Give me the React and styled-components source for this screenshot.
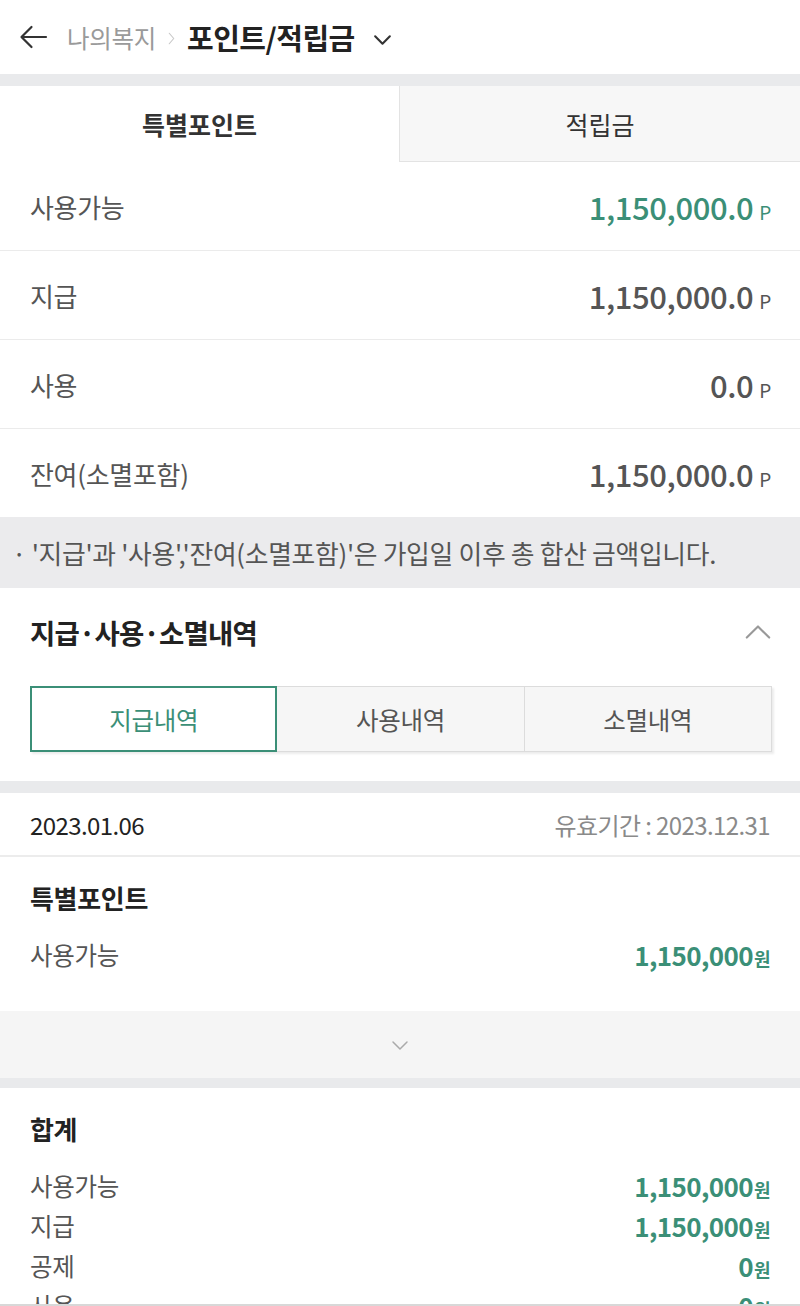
import React from 'react'
import styled, { createGlobalStyle } from 'styled-components'

const GREEN = '#3b8f77'

const GlobalStyle = createGlobalStyle`
  body {
    margin: 0;
    background: #fff;
    font-family: "Noto Sans CJK KR", "Noto Sans", sans-serif;
    color: #333;
  }
  * { box-sizing: border-box; }
`

const Page = styled.div`
  width: 800px;
  height: 1306px;
  overflow: hidden;
  border-bottom: 2px solid #d8d8d8;
`

const Header = styled.header`
  height: 74px;
  display: flex;
  align-items: center;
  padding: 0 18px;
  background: #fff;
`

const Crumb = styled.span`
  font-size: 24.5px;
  color: #9a9a9a;
  margin-left: 19px;
  letter-spacing: -0.3px;
`

const Sep = styled.span`
  display: flex;
  margin: 2px 8px 0 8px;
`

const Title = styled.h1`
  margin: 0;
  font-size: 29px;
  font-weight: 700;
  color: #222;
  letter-spacing: -0.5px;
`

const TitleCaret = styled.span`
  display: flex;
  margin: 4px 0 0 17px;
`

const Band = styled.div`
  height: ${p => p.h || 12}px;
  background: #e9eaec;
`

const Tabs = styled.div`
  display: grid;
  grid-template-columns: 399px 1fr;
  height: 76px;
`

const Tab = styled.div`
  display: flex;
  align-items: center;
  justify-content: center;
  font-size: 25px;
  font-weight: ${p => (p.active ? 700 : 400)};
  color: #333;
  background: ${p => (p.active ? '#fff' : '#f7f7f7')};
  border-left: ${p => (p.active ? 'none' : '1px solid #e3e3e3')};
  border-bottom: ${p => (p.active ? 'none' : '1px solid #e3e3e3')};
`

const PointRow = styled.div`
  height: ${p => p.h || 89}px;
  display: flex;
  align-items: center;
  justify-content: space-between;
  padding: 0 29px 0 30px;
  border-bottom: ${p => (p.last ? 'none' : '1px solid #ebebeb')};
`

const RowLabel = styled.span`
  font-size: 26px;
  color: #555;
  letter-spacing: -0.3px;
`

const BigValue = styled.span`
  font-size: 31px;
  color: ${p => (p.green ? GREEN : '#555')};
  font-weight: 500;
  letter-spacing: -0.4px;
  small {
    font-size: 19px;
    font-weight: 400;
    margin-left: 6px;
  }
`

const Notice = styled.div`
  height: 71px;
  background: #ebebed;
  display: flex;
  align-items: center;
  padding-left: 12px;
  font-size: 25.8px;
  color: #555;
  letter-spacing: -0.3px;
  white-space: nowrap;
`

const SectionHead = styled.div`
  display: flex;
  justify-content: space-between;
  align-items: flex-start;
  padding: 24px 28px 0 30px;
  height: 98px;
`

const SectionTitle = styled.h2`
  margin: 0;
  font-size: 27.5px;
  font-weight: 700;
  color: #222;
  letter-spacing: -0.8px;
`

const UpCaret = styled.span`
  display: flex;
  margin-top: 6px;
`

const Segments = styled.div`
  display: grid;
  grid-template-columns: repeat(3, 1fr);
  margin: 0 28px 0 30px;
  height: 66px;
  box-shadow: 2px 2px 2px rgba(0, 0, 0, 0.08);
`

const Segment = styled.div`
  display: flex;
  align-items: center;
  justify-content: center;
  font-size: 24.5px;
  letter-spacing: -0.3px;
  color: ${p => (p.active ? GREEN : '#555')};
  background: ${p => (p.active ? '#fff' : '#f6f6f6')};
  border: ${p => (p.active ? `2px solid ${GREEN}` : '1px solid #dcdcdc')};
  border-left: ${p => (p.active ? `2px solid ${GREEN}` : 'none')};
`

const Spacer = styled.div`
  height: ${p => p.h}px;
`

const DateRow = styled.div`
  height: 64px;
  display: flex;
  align-items: center;
  justify-content: space-between;
  padding: 0 30px;
  border-bottom: 2px solid #ececec;
`

const DateText = styled.span`
  font-size: 24px;
  color: ${p => (p.muted ? '#8a8a8a' : '#222')};
  letter-spacing: -0.6px;
`

const Card = styled.div`
  padding: 22px 30px 0 30px;
`

const CardTitle = styled.h3`
  margin: 0 0 ${p => p.gap || 18}px 0;
  font-size: 26px;
  font-weight: 700;
  color: #222;
  letter-spacing: -0.3px;
`

const LineRow = styled.div`
  display: flex;
  justify-content: space-between;
  align-items: center;
  height: ${p => p.h || 40}px;
`

const SmallLabel = styled.span`
  font-size: 24.5px;
  color: #555;
  letter-spacing: -0.3px;
`

const WonValue = styled.span`
  font-size: 26px;
  font-weight: 700;
  color: ${GREEN};
  letter-spacing: -0.6px;
  small {
    font-size: 18px;
    margin-left: 1px;
  }
`

const ExpandBar = styled.div`
  height: 67px;
  background: #f5f5f5;
  display: flex;
  align-items: center;
  justify-content: center;
`

const Chevron = ({ dir = 'down', size = 20, color = '#333', w = 2 }) => (
  <svg width={size} height={size} viewBox="0 0 20 20" fill="none">
    <path
      d={dir === 'down' ? 'M3 7l7 7 7-7' : dir === 'up' ? 'M2 14l8-8 8 8' : 'M7 3l6 7-6 7'}
      stroke={color}
      strokeWidth={w}
      strokeLinecap="round"
      strokeLinejoin="round"
    />
  </svg>
)

const BackArrow = () => (
  <svg width="30" height="30" viewBox="0 0 30 30" fill="none">
    <path d="M28 15H4M13.5 5L3.5 15 13.5 25" stroke="#333" strokeWidth="2.2" strokeLinecap="round" strokeLinejoin="round" />
  </svg>
)

const Won = ({ v }) => (
  <WonValue>
    {v}
    <small>원</small>
  </WonValue>
)

const points = [
  { label: '사용가능', value: '1,150,000.0', green: true },
  { label: '지급', value: '1,150,000.0' },
  { label: '사용', value: '0.0' },
  { label: '잔여(소멸포함)', value: '1,150,000.0', last: true },
]

const totals = [
  ['사용가능', '1,150,000'],
  ['지급', '1,150,000'],
  ['공제', '0'],
  ['사용', '0'],
]

export default function App() {
  return (
    <Page>
      <GlobalStyle />
      <Header>
        <BackArrow />
        <Crumb>나의복지</Crumb>
        <Sep>
          <Chevron dir="right" size={15} color="#c8c8c8" w={1.5} />
        </Sep>
        <Title>포인트/적립금</Title>
        <TitleCaret>
          <Chevron size={21} color="#333" w={2} />
        </TitleCaret>
      </Header>
      <Band />
      <Tabs>
        <Tab active>특별포인트</Tab>
        <Tab>적립금</Tab>
      </Tabs>
      {points.map(p => (
        <PointRow key={p.label} last={p.last} h={p.last ? 88 : 89}>
          <RowLabel>{p.label}</RowLabel>
          <BigValue green={p.green}>
            {p.value}
            <small>P</small>
          </BigValue>
        </PointRow>
      ))}
      <Notice>· '지급'과 '사용','잔여(소멸포함)'은 가입일 이후 총 합산 금액입니다.</Notice>
      <SectionHead>
        <SectionTitle>지급·사용·소멸내역</SectionTitle>
        <UpCaret>
          <Chevron dir="up" size={28} color="#999" w={1.5} />
        </UpCaret>
      </SectionHead>
      <Segments>
        <Segment active>지급내역</Segment>
        <Segment>사용내역</Segment>
        <Segment>소멸내역</Segment>
      </Segments>
      <Spacer h={29} />
      <Band />
      <DateRow>
        <DateText>2023.01.06</DateText>
        <DateText muted>유효기간 : 2023.12.31</DateText>
      </DateRow>
      <Card>
        <CardTitle gap={18}>특별포인트</CardTitle>
        <LineRow h={40}>
          <SmallLabel>사용가능</SmallLabel>
          <Won v="1,150,000" />
        </LineRow>
      </Card>
      <Spacer h={37} />
      <ExpandBar>
        <Chevron size={20} color="#aaa" w={1.5} />
      </ExpandBar>
      <Band h={10} />
      <Card>
        <CardTitle gap={18}>합계</CardTitle>
        {totals.map(([l, v]) => (
          <LineRow key={l} h={40}>
            <SmallLabel>{l}</SmallLabel>
            <Won v={v} />
          </LineRow>
        ))}
      </Card>
    </Page>
  )
}
